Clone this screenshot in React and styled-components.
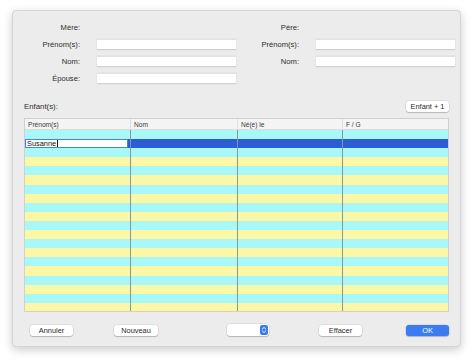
import React from 'react';
import styled, { createGlobalStyle } from 'styled-components';

const Global = createGlobalStyle`
  html, body { margin: 0; padding: 0; background: #ffffff; }
  body { font-family: "Liberation Sans", Arial, sans-serif; color: #2a2a2a; }
  * { box-sizing: border-box; }
`;

const Page = styled.div`
  width: 474px;
  height: 362px;
  padding: 10px 0 0 12px;
`;

const Window = styled.div`
  width: 449px;
  height: 337px;
  background: #ececec;
  border: 1px solid #d4d4d4;
  border-radius: 4px;
  box-shadow: 0 3px 10px rgba(0, 0, 0, 0.2);
  padding: 11px 11px 0 11px;
  display: flex;
  flex-direction: column;
`;

const Form = styled.div`
  display: grid;
  grid-template-columns: 73px 139px 80px 139px;
  grid-auto-rows: 11px;
  row-gap: 6px;
`;

const Label = styled.div`
  font-size: 7.6px;
  color: #2e2e2e;
  text-align: right;
  padding-right: 17px;
  line-height: 11px;
  white-space: nowrap;
`;

const Field = styled.div`
  background: #ffffff;
  height: 11px;
  border-top: 1px solid #e2e2e2;
  border-bottom: 1px solid #d0d0d0;
  box-shadow: 0 0 0 0.5px rgba(0, 0, 0, 0.06);
`;

const Empty = styled.div``;

const Toolbar = styled.div`
  margin-top: 17px;
  height: 11px;
  display: flex;
  align-items: center;
  justify-content: space-between;
`;

const SectionLabel = styled.div`
  font-size: 7.8px;
  color: #2e2e2e;
`;

const Button = styled.div`
  width: ${p => p.$w || 43}px;
  height: 11px;
  margin-left: ${p => p.$ml || 0}px;
  background: ${p => (p.$primary ? '#3b7cf0' : '#ffffff')};
  color: ${p => (p.$primary ? '#ffffff' : '#2a2a2a')};
  border-radius: 3px;
  box-shadow: 0 0 0 0.5px rgba(0, 0, 0, 0.12), 0 1px 1px rgba(0, 0, 0, 0.18);
  font-size: 7.4px;
  display: flex;
  align-items: center;
  justify-content: center;
  white-space: nowrap;
`;

const Table = styled.div`
  margin-top: 6px;
  height: 194px;
  border: 1px solid #d0d0d0;
  display: flex;
  flex-direction: column;
  background: #ffffff;
  overflow: hidden;
`;

const Header = styled.div`
  height: 11px;
  flex: none;
  display: grid;
  grid-template-columns: 105px 107px 105px 1fr;
  background: #f4f4f4;
  border-bottom: 1px solid #dedede;
`;

const HeadCell = styled.div`
  font-size: 6.6px;
  color: #3a3a3a;
  line-height: 11px;
  padding-left: 3px;
  border-left: ${p => (p.$first ? 'none' : '1px solid #e0e0e0')};
  white-space: nowrap;
`;

const Body = styled.div`
  flex: 1;
  overflow: hidden;
`;

const Row = styled.div`
  height: 9.1px;
  display: grid;
  grid-template-columns: 105px 107px 105px 1fr;
  background: ${p => (p.$selected ? '#2b5cd6' : p.$tone === 'cyan' ? '#a9f8f9' : '#fcf7a4')};
`;

const Cell = styled.div`
  border-left: ${p => (p.$first ? 'none' : '1px solid #879a9a')};
  position: relative;
`;

const Editor = styled.div`
  position: absolute;
  left: 0;
  top: 0;
  right: 2px;
  bottom: 0;
  background: #ffffff;
  border: 1px solid #4a7fe6;
  font-size: 7.4px;
  line-height: 7px;
  padding-left: 1px;
  color: #111;
  display: flex;
  align-items: center;
`;

const Caret = styled.span`
  display: inline-block;
  width: 1px;
  height: 7px;
  background: #111;
  margin-left: 0.5px;
`;

const Footer = styled.div`
  margin-top: 12px;
  display: flex;
  align-items: center;
  padding-left: 6px;
`;

const Popup = styled.div`
  width: 42px;
  height: 12px;
  margin-left: ${p => p.$ml}px;
  background: #ffffff;
  border-radius: 3px;
  box-shadow: 0 0 0 0.5px rgba(0, 0, 0, 0.12), 0 1px 1px rgba(0, 0, 0, 0.18);
  display: flex;
  justify-content: flex-end;
  align-items: center;
  padding-right: 1px;
`;

const Stepper = () => (
  <svg width="8" height="10" viewBox="0 0 8 10">
    <rect x="0" y="0" width="8" height="10" rx="2" fill="#3b7cf0" />
    <path d="M2.3 4 L4 2.4 L5.7 4" stroke="#fff" strokeWidth="0.9" fill="none" strokeLinecap="round" strokeLinejoin="round" />
    <path d="M2.3 6 L4 7.6 L5.7 6" stroke="#fff" strokeWidth="0.9" fill="none" strokeLinecap="round" strokeLinejoin="round" />
  </svg>
);

const rows = Array.from({ length: 21 }, (_, i) => i);

export default function App() {
  return (
    <>
      <Global />
      <Page>
        <Window>
          <Form>
            <Label>Mère:</Label>
            <Empty />
            <Label>Père:</Label>
            <Empty />

            <Label>Prénom(s):</Label>
            <Field />
            <Label>Prénom(s):</Label>
            <Field />

            <Label>Nom:</Label>
            <Field />
            <Label>Nom:</Label>
            <Field />

            <Label>Épouse:</Label>
            <Field />
            <Empty />
            <Empty />
          </Form>

          <Toolbar>
            <SectionLabel>Enfant(s):</SectionLabel>
            <Button $w={43}>Enfant + 1</Button>
          </Toolbar>

          <Table>
            <Header>
              <HeadCell $first>Prénom(s)</HeadCell>
              <HeadCell>Nom</HeadCell>
              <HeadCell>Né(e) le</HeadCell>
              <HeadCell>F / G</HeadCell>
            </Header>
            <Body>
              {rows.map(i => (
                <Row key={i} $selected={i === 1} $tone={i % 2 === 0 ? 'cyan' : 'yellow'}>
                  <Cell $first>
                    {i === 1 && (
                      <Editor>
                        Susanne<Caret />
                      </Editor>
                    )}
                  </Cell>
                  <Cell />
                  <Cell />
                  <Cell />
                </Row>
              ))}
            </Body>
          </Table>

          <Footer>
            <Button $w={43}>Annuler</Button>
            <Button $w={44} $ml={41}>Nouveau</Button>
            <Popup $ml={69}>
              <Stepper />
            </Popup>
            <Button $w={43} $ml={50}>Effacer</Button>
            <Button $w={43} $ml={44} $primary>OK</Button>
          </Footer>
        </Window>
      </Page>
    </>
  );
}
